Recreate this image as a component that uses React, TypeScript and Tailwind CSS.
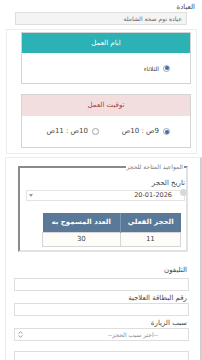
import React from "react";

const Radio = ({ checked }: { checked?: boolean }) => (
	<span className="w-[7px] h-[7px] rounded-full border border-[#9aa3ad] bg-white flex items-center justify-center shrink-0">
		{checked && <span className="w-[4px] h-[4px] rounded-full bg-[#3a6db5]" />}
	</span>
);

const Label = ({ children }: { children: React.ReactNode }) => (
	<div className="h-[8px] leading-[8px] text-[7px] text-[#444] pr-[2px]">{children}</div>
);

const Field = ({ children, gray }: { children?: React.ReactNode; gray?: boolean }) => (
	<div
		className={
			"h-[13px] border border-[#dedede] flex items-center pr-[4px] text-[6px] text-[#666] " +
			(gray ? "bg-[#f4f4f4]" : "bg-white")
		}
	>
		{children}
	</div>
);

export default function App() {
	return (
		<div
			dir="rtl"
			className="w-[202px] h-[360px] overflow-hidden bg-white text-[#444]"
			style={{ fontFamily: '"DejaVu Sans", "Noto Sans", sans-serif' }}
		>
			{/* العيادة */}
			<div className="pt-[3px]">
				<div className="pr-[7px] h-[8px] leading-[8px] text-[7px]">العيادة</div>
				<div className="mx-[15px] mt-[1px]">
					<Field gray>عيادة نوم صحة الشاملة</Field>
				</div>
			</div>

			{/* ايام العمل + توقيت العمل */}
			<div className="ml-[6px] mr-[5px] mt-[4px] border border-[#ececec] pt-[2px] pb-[5px] pr-[5px] pl-[14px] flex flex-col gap-[10px]">
				<div className="border border-[#d4d4d4]">
					<div className="h-[20px] bg-[#2cb2b4] text-white text-[7px] flex items-center justify-center">
						ايام العمل
					</div>
					<div className="h-[30px] flex items-center pr-[20px] gap-[4px] text-[6px]">
						<Radio checked />
						<span>الثلاثاء</span>
					</div>
				</div>

				<div className="border border-[#d4d4d4]">
					<div className="h-[21px] bg-[#f2dede] text-[#a94442] text-[7px] flex items-center justify-center">
						توقيت العمل
					</div>
					<div className="h-[31px] flex items-center pr-[20px] text-[7px]">
						<div className="w-[71px] flex items-center gap-[4px]">
							<Radio checked />
							<span>9ص : 10ص</span>
						</div>
						<div className="flex items-center gap-[4px]">
							<Radio />
							<span>10ص : 11ص</span>
						</div>
					</div>
				</div>
			</div>

			{/* المواعيد + بيانات المريض */}
			<div className="ml-[5px] mt-[3px] border-l border-l-[#ececec] border-r-2 border-r-[#cfcfcf] border-t border-t-[#ececec] pt-[5px] pl-[8px] pr-[11px] pb-[4px]">
				<fieldset className="ml-[4px] mr-[1px] border-2 border-t-[#8a8a8a] border-l-[#8a8a8a] border-r-[#e2e2e2] border-b-[#e2e2e2] pl-[6px] pr-[1px] pb-[3px]">
					<legend className="mr-[1px] px-[1px] text-[6px] leading-[8px] text-[#777]">
						المواعيد المتاحة للحجز
					</legend>
					<div className="mt-[8px] h-[8px] leading-[8px] text-[7px]">تاريخ الحجز</div>
					<div className="relative mt-[3px] h-[11px] border border-[#e4e4e4] flex items-center justify-between pr-[12px] pl-[2px] text-[6.5px]">
						<span>20-01-2026</span>
						<svg width="4" height="3" viewBox="0 0 4 3">
							<path d="M0 0 L4 0 L2 3 Z" fill="#999" />
						</svg>
						<span className="absolute -top-[2px] -right-[3px] w-[7px] h-[7px] rounded-full bg-[#d8d8d8]" />
					</div>
					<table className="mt-[12px] mr-[4px] w-[139px] border-collapse text-[7px]">
						<thead>
							<tr className="h-[19px] bg-[#5a7998] text-white">
								<th className="font-bold border-l border-l-[#7d97b0]">الحجز الفعلي</th>
								<th className="font-bold">العدد المسموح به</th>
							</tr>
						</thead>
						<tbody>
							<tr className="h-[14px] bg-[#fdfcf8]">
								<td className="text-center border border-[#d6d6d6]">11</td>
								<td className="text-center border border-[#d6d6d6]">30</td>
							</tr>
						</tbody>
					</table>
				</fieldset>

				<div className="mt-[14px]">
					<Label>التليفون</Label>
					<div className="mt-[4px]">
						<Field />
					</div>
				</div>
				<div className="mt-[3px]">
					<Label>رقم البطاقة العلاجية</Label>
					<div className="mt-[1px]">
						<Field />
					</div>
				</div>
				<div className="mt-[3px]">
					<Label>سبب الزيارة</Label>
					<div className="mt-[1px] h-[13px] border border-[#dedede] flex items-center justify-between pr-[30px] pl-[3px] text-[6px] text-[#888]">
						<span>--اختر سبب الحجز--</span>
						<svg width="5" height="7" viewBox="0 0 5 7">
							<path d="M0.5 2.5 L2.5 0.8 L4.5 2.5 M0.5 4.5 L2.5 6.2 L4.5 4.5" fill="none" stroke="#888" strokeWidth="0.8" />
						</svg>
					</div>
				</div>
				<div className="mt-[10px] h-[20px] border border-[#dedede]" />
			</div>
		</div>
	);
}
